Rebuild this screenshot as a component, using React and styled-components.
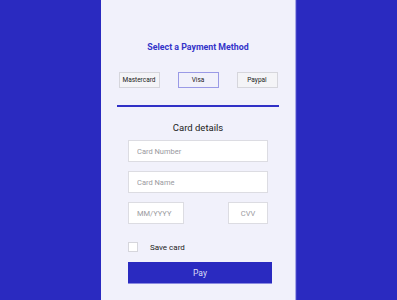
import React, { useState } from 'react'
import styled, { createGlobalStyle } from 'styled-components'

const GlobalStyle = createGlobalStyle`
    html, body {
        margin: 0;
        padding: 0;
        background: #2a2ac0;
        font-family: Roboto, "Liberation Sans", sans-serif;
    }
`

function App() {
    const [method, setMethod] = useState('Visa')
    const [save, setSave] = useState(false)

    return (
        <Page>
            <GlobalStyle />
            <Panel>
                <Title>Select a Payment Method</Title>
                <Methods>
                    {['Mastercard', 'Visa', 'Paypal'].map((m) => (
                        <MethodButton key={m} $active={method === m} onClick={() => setMethod(m)}>
                            {m}
                        </MethodButton>
                    ))}
                </Methods>
                <Divider />
                <SubTitle>Card details</SubTitle>
                <Form>
                    <Input placeholder="Card Number" />
                    <Input placeholder="Card Name" />
                    <Row>
                        <Input $width="56px" placeholder="MM/YYYY" />
                        <Input $width="40px" $center placeholder="CVV" />
                    </Row>
                    <CheckRow onClick={() => setSave(!save)}>
                        <Check $checked={save} />
                        <span>Save card</span>
                    </CheckRow>
                    <PayButton>Pay</PayButton>
                </Form>
            </Panel>
        </Page>
    )
}

const Page = styled.div`
    width: 397px;
    height: 300px;
    background: #2a2ac0;
    display: flex;
    overflow: hidden;
`

const Panel = styled.div`
    margin-left: 101px;
    width: 194px;
    height: 300px;
    background: #f1f1fb;
    box-shadow: 1px 0 1px rgba(200, 200, 240, 0.8);
    display: flex;
    flex-direction: column;
    align-items: center;
    box-sizing: border-box;
    padding-top: 41px;
`

const Title = styled.h2`
    margin: 0;
    font-size: 8.8px;
    font-weight: 700;
    color: #3434c9;
    line-height: 12px;
`

const Methods = styled.div`
    margin-top: 19px;
    display: flex;
    gap: 18px;
`

const MethodButton = styled.button`
    width: 41px;
    height: 16px;
    padding: 0;
    font-family: Roboto, "Liberation Sans", sans-serif;
    font-size: 6.5px;
    color: #222;
    background: ${(p) => (p.$active ? '#f1f1fb' : '#f4f4f7')};
    border: 1px solid ${(p) => (p.$active ? '#9a9ae6' : '#d6d6dc')};
    border-radius: 0;
    cursor: pointer;
`

const Divider = styled.div`
    margin-top: 17px;
    margin-left: -1px;
    width: 162px;
    height: 2px;
    background: #3030c6;
`

const SubTitle = styled.h3`
    margin: 15px 0 0;
    font-size: 9.5px;
    font-weight: 400;
    color: #222;
    line-height: 12px;
`

const Form = styled.div`
    align-self: flex-start;
    margin: 6px 0 0 27px;
    width: 144px;
    display: flex;
    flex-direction: column;
    gap: 9px;
`

const Input = styled.input`
    box-sizing: border-box;
    width: ${(p) => p.$width || '140px'};
    height: 22px;
    padding: 0 ${(p) => (p.$center ? '0' : '8px')};
    text-align: ${(p) => (p.$center ? 'center' : 'left')};
    background: #fff;
    border: 1px solid #dcdce2;
    border-radius: 0;
    font-family: Roboto, "Liberation Sans", sans-serif;
    font-size: 7.5px;
    color: #333;
    outline: none;

    &::placeholder {
        color: #9a9aa0;
    }
`

const Row = styled.div`
    display: flex;
    justify-content: space-between;
    width: 140px;
`

const CheckRow = styled.label`
    margin-top: 9px;
    display: flex;
    align-items: center;
    gap: 12px;
    height: 10px;
    font-size: 8px;
    color: #222;
    cursor: pointer;
`

const Check = styled.span`
    width: 8px;
    height: 8px;
    background: ${(p) => (p.$checked ? '#2a2ac0' : '#fff')};
    border: 1px solid #d6d6dc;
`

const PayButton = styled.button`
    margin-top: 1px;
    width: 144px;
    height: 22px;
    background: #2a2ac0;
    border: none;
    border-bottom: 1px solid #8a8ae0;
    color: #dcdcf6;
    font-family: Roboto, "Liberation Sans", sans-serif;
    font-size: 8.5px;
    cursor: pointer;
`

export default App
